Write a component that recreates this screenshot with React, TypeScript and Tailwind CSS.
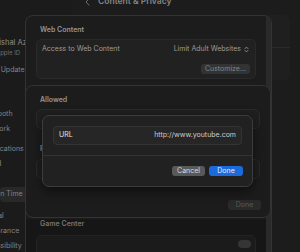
import React from "react";

function UpDown() {
  return (
    <svg width="5" height="7" viewBox="0 0 5 7" className="ml-[3px]">
      <path d="M1 2.6 L2.5 1.1 L4 2.6" stroke="#9a9a9a" strokeWidth="0.9" fill="none" strokeLinecap="round" strokeLinejoin="round" />
      <path d="M1 4.4 L2.5 5.9 L4 4.4" stroke="#9a9a9a" strokeWidth="0.9" fill="none" strokeLinecap="round" strokeLinejoin="round" />
    </svg>
  );
}

function SideRow({ text, shift, active }: { text: string; shift: string; active?: boolean }) {
  return (
    <div className={"h-[15px] flex items-center rounded-[4px] whitespace-nowrap " + (active ? "bg-[#292929]" : "")}>
      <span className={shift}>{text}</span>
    </div>
  );
}

function Sidebar() {
  return (
    <div className="w-[72px] h-full bg-[#1b1b1b] flex flex-col text-[7px] text-[#838383] overflow-hidden">
      <div className="h-[38px] shrink-0" />
      <div className="h-[10px] flex items-center whitespace-nowrap text-[7.5px] text-[#8e8e8e]"><span className="-ml-[6px]">Vishal Azad</span></div>
      <div className="h-[8px] flex items-center whitespace-nowrap text-[6px] text-[#6e6e6e]"><span className="-ml-[4px]">Apple ID</span></div>
      <div className="mt-[7px]"><SideRow text="Software Update" shift="-ml-[31px]" /></div>
      <div className="mt-[14px]">
        <SideRow text="Wi-Fi" shift="-ml-[20px]" />
        <SideRow text="Bluetooth" shift="-ml-[19px]" />
        <SideRow text="Network" shift="-ml-[18px]" />
      </div>
      <div className="mt-[5px]">
        <SideRow text="Notifications" shift="-ml-[18px]" />
        <SideRow text="Sound" shift="-ml-[20px]" />
        <SideRow text="Focus" shift="-ml-[20px]" />
        <SideRow text="Screen Time" shift="-ml-[19px]" active />
      </div>
      <div className="mt-[7px]">
        <SideRow text="General" shift="-ml-[22px]" />
        <SideRow text="Appearance" shift="-ml-[21px]" />
        <SideRow text="Accessibility" shift="-ml-[20px]" />
      </div>
    </div>
  );
}

function Main() {
  return (
    <div className="flex-1 h-full bg-[#1c1c1c] flex flex-col">
      <div className="-mt-[5px] h-[13px] flex items-center pl-[13px] gap-[8px] text-[#858585]">
        <svg width="5" height="8" viewBox="0 0 5 8">
          <path d="M4 0.8 L1 4 L4 7.2" stroke="#6e6e6e" strokeWidth="1" fill="none" strokeLinecap="round" strokeLinejoin="round" />
        </svg>
        <span className="text-[8.5px] font-semibold whitespace-nowrap">Content &amp; Privacy</span>
      </div>
      <div className="mt-[7px] mx-[12px] mr-[10px] rounded-[5px] bg-[#1f1f1f] flex flex-col">
        <div className="h-[33px] border-b border-[#2a2a2a]" />
        <div className="h-[32px]" />
      </div>
    </div>
  );
}

function GroupBox({ children, className }: { children?: React.ReactNode; className?: string }) {
  return (
    <div className={"mx-[10px] rounded-[5px] border " + (className || "")}>{children}</div>
  );
}

function SheetA() {
  return (
    <div className="absolute left-[25px] top-[15px] w-[247px] h-[260px] rounded-[8px] border border-[#333333] bg-[#1c1c1c] flex overflow-hidden">
      <div className="flex-1 flex flex-col">
        <div className="pt-[9px] pl-[14px] h-[23px] text-[7px] font-semibold text-[#959595]">Web Content</div>
        <GroupBox className="h-[40px] flex flex-col bg-[#212121] border-[#292929]">
          <div className="h-[19px] flex items-center justify-between pl-[5px] pr-[6px] text-[7px] text-[#9c9c9c]">
            <span>Access to Web Content</span>
            <span className="flex items-center">Limit Adult Websites<UpDown /></span>
          </div>
          <div className="flex justify-end pr-[5px] mt-[5px]">
            <div className="h-[10px] px-[4px] rounded-[3px] bg-[#333333] text-[7px] leading-[10px] text-[#858585]">Customize...</div>
          </div>
        </GroupBox>
        <div className="h-[140px]" />
        <div className="pl-[14px] h-[16px] text-[7px] font-semibold text-[#747474] bg-[#161616]">Game Center</div>
        <div className="bg-[#161616] flex-1">
          <GroupBox className="h-[30px] bg-[#1b1b1b] border-[#232323] flex justify-end pt-[4px] pr-[4px]">
            <div className="w-[13px] h-[8px] rounded-[4px] bg-[#353535]" />
          </GroupBox>
        </div>
      </div>
      <div className="w-[5px] bg-[#2a2a2a]" />
    </div>
  );
}

function ListBox() {
  return (
    <GroupBox className="h-[20px] flex items-end pb-[2px] pl-[4px] bg-[#1f1f1f] border-[#2a2a2a]">
      <span className="text-[8px] leading-[9px] text-[#767676]">+</span>
      <span className="ml-[6px] text-[8px] leading-[9px] text-[#767676]">−</span>
    </GroupBox>
  );
}

function SheetB() {
  return (
    <div className="absolute left-[25px] top-[85px] w-[246px] h-[133px] rounded-[8px] border border-[#333333] bg-[#1c1c1c] flex flex-col">
      <div className="pt-[9px] pl-[14px] h-[23px] text-[7px] font-semibold text-[#959595]">Allowed</div>
      <ListBox />
      <div className="pt-[15px] pl-[14px] h-[30px] text-[7px] font-semibold text-[#959595]">Restricted</div>
      <ListBox />
      <div className="flex justify-end pr-[9px] mt-[21px]">
        <div className="w-[33px] h-[10px] rounded-[3px] bg-[#2a2a2a] text-center text-[7px] leading-[10px] text-[#5a5a5a]">Done</div>
      </div>
    </div>
  );
}

function Dialog() {
  return (
    <div className="absolute left-[42px] top-[115px] w-[211px] h-[72px] rounded-[7px] border border-[#3c3c3c] bg-[#212121] flex flex-col shadow-[0_4px_12px_rgba(0,0,0,0.5)]">
      <div className="pt-[10px] px-[10px] pb-[10px] border-b border-[#333333]">
        <div className="h-[19px] rounded-[4px] bg-[#262626] border border-[#343434] flex items-center justify-between px-[5px] text-[7px]">
          <span className="text-[#e2e2e2]">URL</span>
          <span className="text-[#cccccc]">http://www.youtube.com</span>
        </div>
      </div>
      <div className="flex justify-end gap-[4px] pr-[9px] pt-[10px]">
        <div className="w-[33px] h-[10px] rounded-[3px] bg-[#595959] text-center text-[7px] leading-[10px] text-[#dadada]">Cancel</div>
        <div className="w-[34px] h-[10px] rounded-[3px] bg-[#1c6bdc] text-center text-[7px] leading-[10px] text-[#e6efff]">Done</div>
      </div>
    </div>
  );
}

export default function App() {
  return (
    <div className="relative w-[300px] h-[252px] overflow-hidden bg-[#1c1c1c] font-['Inter','Noto_Sans',sans-serif]">
      <div className="flex h-full">
        <Sidebar />
        <Main />
      </div>
      <SheetA />
      <SheetB />
      <Dialog />
    </div>
  );
}
